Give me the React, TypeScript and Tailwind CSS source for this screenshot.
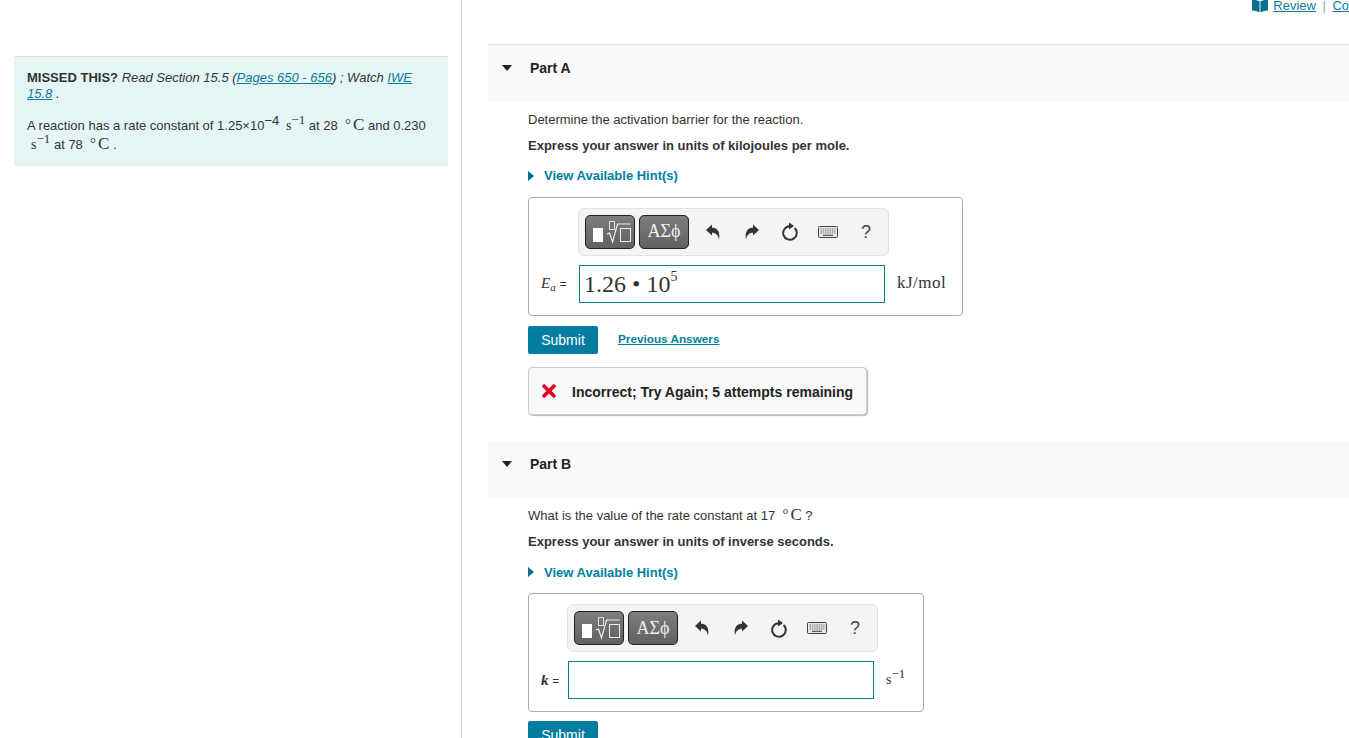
import { FaTimes, FaBookOpen } from 'react-icons/fa';

const serif = 'font-["Liberation_Serif",serif]';

function Degrees() {
    return (
        <span className={`${serif} text-[17px] leading-none`}>
            <span className="text-[15px] relative -top-[1px] mr-[2px]">°</span>C
        </span>
    );
}

function InverseSeconds() {
    return (
        <span className={`${serif} text-[14px] leading-none whitespace-nowrap`}>
            s<sup className="text-[13px] -top-[6px] leading-none relative align-baseline">−1</sup>
        </span>
    );
}

function ArrowDown() {
    return <span className="block w-0 h-0 border-x-[5px] border-x-transparent border-t-[6px] border-t-[#222]" />;
}

function UndoIcon({ flip }: { flip?: boolean }) {
    return (
        <svg width="14" height="16" viewBox="0 0 14 16" className={flip ? '-scale-x-100' : ''}>
            <path d="M0 6 L6 .5 V3.8 C11 3.8 14.5 7.5 13 15.5 C12 11 10 8.8 6 8.8 V11.6 Z" fill="#333" />
        </svg>
    );
}

function RefreshIcon() {
    return (
        <svg width="18" height="19" viewBox="0 0 18 19" fill="none">
            <path d="M8.5 4.2A6.8 6.8 0 1 0 13.6 6" stroke="#333" strokeWidth="2" />
            <path d="M8 .5V7.5L13 4Z" fill="#333" />
        </svg>
    );
}

function KeyboardIcon() {
    return (
        <svg width="20" height="12" viewBox="0 0 20 12">
            <rect x="0.5" y="0.5" width="19" height="11" rx="1" fill="#e6e6e6" stroke="#444" />
            <path d="M2.5 3h15M2.5 5h15M2.5 7h15" stroke="#777" strokeWidth="1" strokeDasharray="1.5 0.8" />
            <path d="M5 9.3h10" stroke="#555" strokeWidth="1.2" />
        </svg>
    );
}

function Toolbar() {
    return (
        <div className="flex items-center w-[311px] h-[48px] pl-[6px] rounded-md border border-[#e4e4e4] bg-[#f4f4f4] text-[#333]">
            <div className="w-[50px] h-[34px] rounded-[5px] border border-[#222] bg-gradient-to-b from-[#7d7d7d] to-[#616161]">
                <svg width="48" height="32" viewBox="0 0 48 32" fill="none">
                    <rect x="7" y="12" width="10" height="14" fill="#fff" />
                    <rect x="23.5" y="5.5" width="5" height="8" stroke="#ddd" />
                    <path d="M21 18l2.5-1 3 9 5-18h13" stroke="#eee" strokeWidth="1.2" />
                    <rect x="34.5" y="12.5" width="10" height="13" stroke="#eee" />
                </svg>
            </div>
            <div className={`${serif} ml-[4px] flex items-center justify-center w-[50px] h-[34px] rounded-[5px] border border-[#222] bg-gradient-to-b from-[#7d7d7d] to-[#616161] text-[#eee] text-[18px]`}>
                ΑΣϕ
            </div>
            <div className="ml-[16px] flex items-center w-[16px] justify-center"><UndoIcon /></div>
            <div className="ml-[23px] flex items-center w-[16px] justify-center"><UndoIcon flip /></div>
            <div className="ml-[21px] flex items-center w-[18px] justify-center"><RefreshIcon /></div>
            <div className="ml-[19px] flex items-center"><KeyboardIcon /></div>
            <div className="ml-[23px] text-[18px] text-[#444] leading-none">?</div>
        </div>
    );
}

function Eqn({ boxW, labelW, label, value, unit }: { boxW: string; labelW: string; label: React.ReactNode; value?: React.ReactNode; unit: React.ReactNode }) {
    return (
        <div className={`${boxW} h-[119px] rounded-[4px] border border-[#aaa] pl-[12px] pt-[10px]`}>
            <div className="flex">
                <div className={labelW} />
                <div className="-ml-px"><Toolbar /></div>
            </div>
            <div className="flex items-center mt-[9px]">
                <div className={`${labelW} ${serif} text-[15px] text-[#333] whitespace-nowrap`}>{label}</div>
                <div className={`${serif} w-[306px] h-[38px] border border-[#007c9c] pl-[4px] flex items-center text-[24px] text-[#333]`}>{value}</div>
                <div className={`${serif} ml-[12px] -mt-[2px] text-[#333]`}>{unit}</div>
            </div>
        </div>
    );
}

function PartHeader({ title, line }: { title: string; line?: boolean }) {
    return (
        <div className={`h-[57px] bg-[#f9f9f9] flex items-start ${line ? 'border-t border-[#e3e3e3]' : ''}`}>
            <div className="ml-[14px] mt-[20px]"><ArrowDown /></div>
            <div className="ml-[18px] mt-[15px] text-[14px] leading-[16px] font-bold text-[#222]">{title}</div>
        </div>
    );
}

function HintLink() {
    return (
        <div className="flex items-center text-[#007f9f] font-bold text-[13px]">
            <span className="block w-0 h-0 border-y-[5px] border-y-transparent border-l-[6px] border-l-[#0a6f8c]" />
            <span className="ml-[10px]">View Available Hint(s)</span>
        </div>
    );
}

function SubmitButton() {
    return <button className="w-[70px] h-[28px] pt-px shrink-0 rounded-[2px] bg-[#027da0] text-white text-[14px]">Submit</button>;
}

export default function App() {
    return (
        <div className="flex h-[738px] overflow-hidden bg-white font-['Liberation_Sans',sans-serif] text-[#333]">
            {/* Left column */}
            <div className="w-[462px] shrink-0 border-r border-[#c6ccd2] pt-[56px] px-[14px]">
                <div className="w-[434px] h-[110px] bg-[#e5f5f6] border-t border-[#d8e0e2] pl-[13px] pr-[20px] pt-[13px] text-[13px] leading-[16px]">
                    <p>
                        <b>MISSED THIS?</b>{' '}
                        <i>Read Section 15.5 (</i>
                        <i className="underline text-[#0b7d9c]">Pages 650 - 656</i>
                        <i>) ; Watch </i>
                        <i className="underline text-[#0b7d9c]">IWE</i>{' '}
                        <i className="underline text-[#0b7d9c]">15.8</i>
                        <i> .</i>
                    </p>
                    <p className="mt-[14px] leading-[19px]">
                        <span>A reaction has a rate constant of 1.25×10</span>
                        <sup className="text-[13px] -top-[5px] leading-none relative align-baseline">−4</sup>&nbsp;
                        <span className="ml-[3px]"><InverseSeconds /></span> <span>at 28</span> &nbsp;<Degrees /> <span>and 0.230</span>{' '}
                        <span className="ml-[4px]"><InverseSeconds /></span> <span>at 78</span> &nbsp;<Degrees /> .
                    </p>
                </div>
            </div>

            {/* Right column */}
            <div className="relative flex-1 min-w-0 pl-[26px] pt-[44px]">
                <div className="absolute top-0 right-0 h-[11px] flex items-center text-[13px] leading-[11px] text-[#0b7d9c] whitespace-nowrap">
                    <FaBookOpen size={16} color="#0a6f8c" />
                    <span className="ml-[2px] pl-[3px] underline">Review</span>
                    <span className="mx-[6.5px] text-[#8ab]">|</span>
                    <span className="underline">Co</span>
                </div>

                <PartHeader title="Part A" line />
                <div className="pl-[40px]">
                    <p className="mt-[11px] text-[13px] leading-[16px]">Determine the activation barrier for the reaction.</p>
                    <p className="mt-[10px] text-[13px] leading-[16px] font-bold">Express your answer in units of kilojoules per mole.</p>
                    <div className="mt-[12px]"><HintLink /></div>
                    <div className="mt-[11px]">
                        <Eqn
                            boxW="w-[435px]"
                            labelW="w-[38px]"
                            label={<><i>E<sub className="text-[11px]">a</sub></i> <span className="font-['Liberation_Sans',sans-serif] text-[12px]">=</span></>}
                            value={<>1.26 • 10<sup className="text-[14px] -top-[7px] relative align-baseline">5</sup></>}
                            unit={<span className="text-[17px] tracking-[0.5px]">kJ/mol</span>}
                        />
                    </div>
                    <div className="flex items-start mt-[10px]">
                        <SubmitButton />
                        <span className="ml-[20px] mt-[4px] underline font-bold text-[11.75px] text-[#007f9f]">Previous Answers</span>
                    </div>
                    <div className="flex items-center mt-[13px] w-[339px] h-[48px] rounded-[4px] border border-[#ccc] bg-[#f9f9f9] shadow-[1px_1px_1px_#bbb] pl-[10px] pt-px">
                        <FaTimes size={20} color="#e0002b" />
                        <span className="ml-[13px] pt-[2px] text-[14px] font-bold text-[#222]">Incorrect; Try Again; 5 attempts remaining</span>
                    </div>
                </div>

                <div className="mt-[26px]"><PartHeader title="Part B" /></div>
                <div className="pl-[40px]">
                    <p className="mt-[8px] h-[16px] text-[13px] leading-[16px]">What is the value of the rate constant at 17 &nbsp;<Degrees /> ?</p>
                    <p className="mt-[12px] text-[13px] leading-[16px] font-bold">Express your answer in units of inverse seconds.</p>
                    <div className="mt-[13px]"><HintLink /></div>
                    <div className="mt-[11px]">
                        <Eqn
                            boxW="w-[396px]"
                            labelW="w-[27px]"
                            label={<><i className="font-bold">k</i> <span className="font-['Liberation_Sans',sans-serif] text-[12px]">=</span></>}
                            unit={<InverseSeconds />}
                        />
                    </div>
                    <div className="mt-[9px]"><SubmitButton /></div>
                </div>
            </div>
        </div>
    );
}
